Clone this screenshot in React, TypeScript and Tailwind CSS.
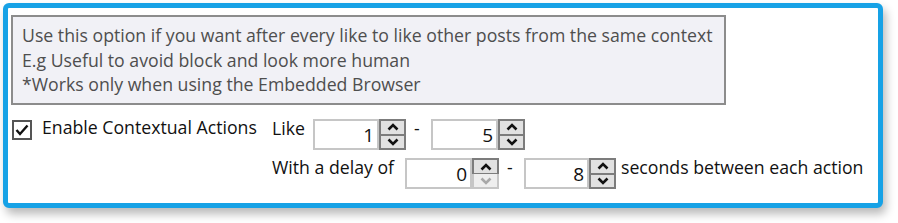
const FONT = "font-['Segoe_UI','Open_Sans','Noto_Sans',sans-serif]";

function Chevron({ up, disabled }: { up?: boolean; disabled?: boolean }) {
  return (
    <svg width="12" height="8" viewBox="0 0 12 8">
      <polyline
        points={up ? "1.5,6.5 6,2 10.5,6.5" : "1.5,1.5 6,6 10.5,1.5"}
        fill="none"
        stroke={disabled ? "#a8a8a8" : "#111"}
        strokeWidth="2.6"
      />
    </svg>
  );
}

function Spin({ value, width, downDisabled }: { value: string; width: string; downDisabled?: boolean }) {
  return (
    <div className="flex h-[31px]">
      <div
        className={`${width} flex items-center justify-end border-2 border-[#c6c6c6] bg-white pr-[3px] text-[19px] text-[#111]`}
      >
        {value}
      </div>
      <div className="flex w-[27px] flex-col">
        <div className="flex flex-1 items-center justify-center border-2 border-[#7c7c7c] bg-[#e1e1e1]">
          <Chevron up />
        </div>
        {downDisabled ? (
          <div className="-mt-px flex flex-1 items-center justify-center border-2 border-t-0 border-[#c6c6c6] bg-[#eeeeee]">
            <Chevron disabled />
          </div>
        ) : (
          <div className="flex flex-1 items-center justify-center border-2 border-t-0 border-[#7c7c7c] bg-[#e1e1e1]">
            <Chevron />
          </div>
        )}
      </div>
    </div>
  );
}

export default function App() {
  return (
    <div className={`h-[223px] w-[898px] bg-white pl-[3px] pt-[3px] ${FONT}`}>
      <div className="h-[205px] w-[880px] rounded-[6px] border-[5px] border-[#17a2e6] bg-white shadow-[3px_6px_10px_rgba(0,0,0,0.28)]">
        <div className="pl-[3px] pt-[7px]">
          <div className="h-[90px] w-[715px] border-2 border-[#8c8c8c] bg-[#f1f1f6] pl-[9px] pt-[6px] text-[17.7px] leading-[24.5px] text-[#4e4e4e]">
            <p>Use this option if you want after every like to like other posts from the same context</p>
            <p>E.g Useful to avoid block and look more human</p>
            <p>*Works only when using the Embedded Browser</p>
          </div>
        </div>

        <div className="mt-[14px] flex pl-[4px] text-[17.7px] leading-[26px] text-[#111]">
          <div className="flex w-[260px] items-start pt-[1px]">
            <div className="flex h-[20px] w-[20px] shrink-0 items-center justify-center border-2 border-[#555] bg-white">
              <svg width="14" height="12" viewBox="0 0 14 12">
                <polyline points="1.5,6 5,10 12.5,1.5" fill="none" stroke="#111" strokeWidth="2.4" />
              </svg>
            </div>
            <span className="ml-[10px] -mt-[6px] whitespace-nowrap">Enable Contextual Actions</span>
          </div>

          <div className="flex flex-col gap-[8px]">
            <div className="flex items-start">
              <span className="w-[41px] -mt-[4px]">Like</span>
              <Spin value="1" width="w-[66px]" />
              <span className="w-[25px] pl-[8px] -mt-[4px]">-</span>
              <Spin value="5" width="w-[67px]" />
            </div>
            <div className="flex items-start">
              <span className="w-[133px] -mt-[4px] whitespace-nowrap">With a delay of</span>
              <Spin value="0" width="w-[67px]" downDisabled />
              <span className="w-[25px] pl-[8px] -mt-[4px]">-</span>
              <Spin value="8" width="w-[65px]" />
              <span className="ml-[5px] -mt-[4px] whitespace-nowrap">seconds between each action</span>
            </div>
          </div>
        </div>
      </div>
    </div>
  );
}
